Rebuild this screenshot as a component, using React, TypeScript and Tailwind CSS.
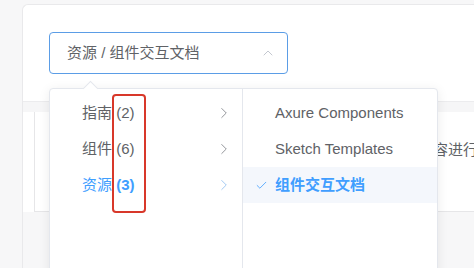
import { ChevronRight, ChevronUp, Check } from 'lucide-react';

const font = { fontFamily: '"Liberation Sans", "Noto Sans CJK SC", sans-serif' };

const groups = [
  { label: '指南', count: 2 },
  { label: '组件', count: 6 },
  { label: '资源', count: 3, active: true },
];

const resources = [
  { label: 'Axure Components' },
  { label: 'Sketch Templates' },
  { label: '组件交互文档', active: true },
];

export default function App() {
  return (
    <div className="relative h-[268px] w-[474px] overflow-hidden bg-[#f7f7f8] pl-[22px] pt-[4px]" style={font}>
      {/* card behind the cascader */}
      <div className="flex h-full flex-col rounded-tl-[6px] border-l border-t border-[#e9e9eb] bg-white">
        <div className="h-[96px] pl-[26px] pt-[27px]">
          <div className="flex h-[42px] w-[239px] items-center justify-between rounded-[4px] border border-[#5b9de6] pl-[17px] pr-[11px] text-[15px] text-[#606266]">
            <span>资源 / 组件交互文档</span>
            <ChevronUp className="h-[16px] w-[16px] text-[#c0c4cc]" strokeWidth={1.4} />
          </div>
        </div>
        <div className="h-[11px] border-t border-[#ececee] bg-[#f6f6f7]" />
        <div className="ml-[11px] flex h-[100px] items-start overflow-hidden border-b border-l border-[#e6e6e8] bg-white pl-[368px] pt-[27px] text-[15px] text-[#606266]">
          <span className="whitespace-nowrap">对内容进行</span>
        </div>
        <div className="flex-1 bg-[#f7f7f8]" />
      </div>

      {/* cascader dropdown */}
      <div className="absolute left-[49px] top-[88px] flex h-[200px] w-[389px] rounded-[4px] border border-[#e4e7ed] bg-white shadow-[0_2px_12px_rgba(0,0,0,0.08)]">
        <div className="absolute -top-[6px] left-[35px] h-[11px] w-[11px] rotate-45 border-l border-t border-[#e4e7ed] bg-white" />
        <ul className="w-[193px] border-r border-[#e4e7ed] py-[6px]">
          {groups.map((g) => (
            <li
              key={g.label}
              className={`flex h-[36px] items-center justify-between pl-[32px] pr-[9px] text-[15px] ${
                g.active ? 'text-[#409eff]' : 'text-[#606266]'
              }`}
            >
              <span>
                {g.label} <span className={g.active ? 'font-bold' : ''}>({g.count})</span>
              </span>
              <ChevronRight className={`h-[18px] w-[18px] ${g.active ? 'text-[#8fbff0]' : 'text-[#7d7f85]'}`} strokeWidth={1.1} />
            </li>
          ))}
        </ul>
        <ul className="flex-1 py-[6px]">
          {resources.map((r) => (
            <li
              key={r.label}
              className={`relative flex h-[36px] items-center pl-[32px] text-[15px] ${
                r.active ? 'bg-[#f4f7fc] font-bold text-[#409eff]' : 'text-[#606266]'
              }`}
            >
              {r.active && <Check className="absolute left-[12px] h-[13px] w-[13px] text-[#409eff]" strokeWidth={1.5} />}
              {r.label}
            </li>
          ))}
        </ul>
      </div>

      {/* highlight around counts */}
      <div className="absolute left-[112px] top-[94px] h-[119px] w-[34px] rounded-[4px] border-[2.5px] border-[#d8382a]" />
    </div>
  );
}
